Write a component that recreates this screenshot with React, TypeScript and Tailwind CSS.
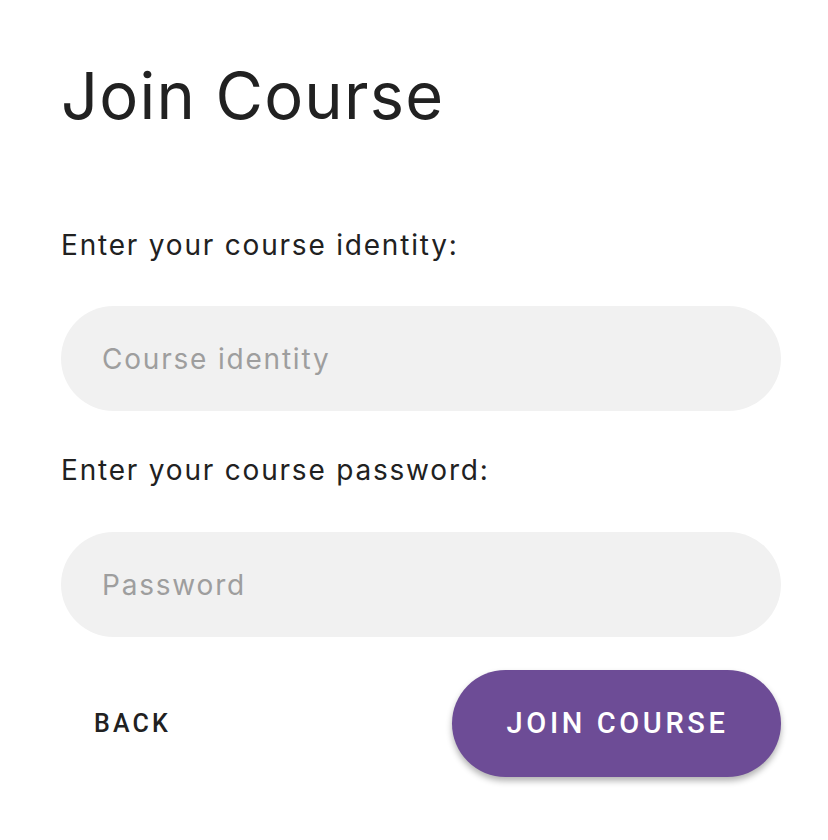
export default function App() {
  return (
    <div className="min-h-[840px] w-[828px] bg-white font-['Inter',sans-serif] text-[#212121]">
      <div className="ml-[61px] w-[720px] pt-[56px]">
        <h1 className="text-[65px] leading-[80px] font-normal tracking-[1.2px]">Join Course</h1>
        <div className="mt-[89px] text-[28px] leading-[40px] tracking-[1.8px]">Enter your course identity:</div>
        <input
          className="mt-[41px] block h-[105px] w-[720px] rounded-full bg-[#f1f1f1] pl-[41px] text-[28px] tracking-[1.8px] outline-none placeholder:text-[#9e9e9e]"
          placeholder="Course identity"
        />
        <div className="mt-[39px] text-[28px] leading-[40px] tracking-[1.8px]">Enter your course password:</div>
        <input
          type="password"
          className="mt-[42px] block h-[105px] w-[720px] rounded-full bg-[#f1f1f1] pl-[41px] text-[28px] tracking-[1.8px] outline-none placeholder:text-[#9e9e9e]"
          placeholder="Password"
        />
        <div className="mt-[33px] flex items-center justify-between">
          <button className="ml-[33px] font-['Roboto',sans-serif] text-[25px] font-medium tracking-[3.2px] text-[#212121]">
            BACK
          </button>
          <button className="h-[107px] w-[329px] rounded-full bg-[#6d4c96] pl-[2px] font-['Roboto',sans-serif] text-[29px] font-medium tracking-[3.6px] text-white shadow-[0_4px_6px_rgba(0,0,0,0.3)]">
            JOIN COURSE
          </button>
        </div>
      </div>
    </div>
  );
}
